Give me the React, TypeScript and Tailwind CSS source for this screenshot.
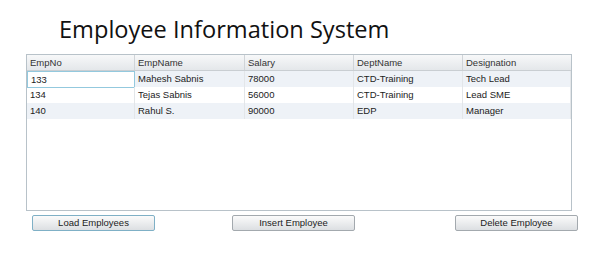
import React from "react";

const columns = ["EmpNo", "EmpName", "Salary", "DeptName", "Designation"];

const rows = [
  ["133", "Mahesh Sabnis", "78000", "CTD-Training", "Tech Lead"],
  ["134", "Tejas Sabnis", "56000", "CTD-Training", "Lead SME"],
  ["140", "Rahul S.", "90000", "EDP", "Manager"],
];

function Button({ label, focused, className }: { label: string; focused?: boolean; className?: string }) {
  return (
    <button
      className={
        "h-[16px] w-[123px] rounded-[2px] border bg-gradient-to-b from-[#fbfbfb] to-[#dcdfe2] text-[9.5px] leading-none text-[#222] " +
        (focused ? "border-[#7fb0c6] " : "border-[#a3a9ae] ") +
        (className ?? "")
      }
    >
      {label}
    </button>
  );
}

export default function App() {
  return (
    <div
      className="h-[268px] w-[598px] bg-white"
      style={{ fontFamily: '"Liberation Sans", Arial, sans-serif' }}
    >
      <h1
        className="pl-[59px] pt-[16px] text-[23.6px] leading-[26px] text-[#111]"
        style={{ fontFamily: '"Open Sans", "Segoe UI", sans-serif' }}
      >
        Employee Information System
      </h1>

      <div className="ml-[26px] mt-[12px] h-[157px] w-[546px] border border-[#b8c2c9] bg-white">
        <div className="grid h-[16px] grid-cols-[108px_110px_109px_109px_1fr] border-b border-[#c9ced2] bg-gradient-to-b from-[#f7f8f9] to-[#e4e7ea]">
          {columns.map((c) => (
            <div
              key={c}
              className="border-r border-[#d0d4d8] pl-[3px] text-[9.5px] leading-[15px] text-[#333] last:border-r-0"
            >
              {c}
            </div>
          ))}
        </div>
        {rows.map((r, i) => (
          <div
            key={r[0]}
            className={
              "grid h-[16px] grid-cols-[108px_110px_109px_109px_1fr] " +
              (i % 2 === 0 ? "bg-[#eef2f7]" : "bg-white")
            }
          >
            {r.map((v, j) => (
              <div
                key={j}
                className={
                  "pl-[3px] text-[9.5px] leading-[15px] text-[#222] " +
                  (i === 0 && j === 0
                    ? "border border-[#93c9de] bg-white leading-[14px] pl-[2px]"
                    : "border-r border-[#e3e6e9]")
                }
              >
                {v}
              </div>
            ))}
          </div>
        ))}
      </div>

      <div className="mt-[4px] flex">
        <Button label="Load Employees" focused className="ml-[32px]" />
        <Button label="Insert Employee" className="ml-[77px]" />
        <Button label="Delete Employee" className="ml-[100px]" />
      </div>
    </div>
  );
}
